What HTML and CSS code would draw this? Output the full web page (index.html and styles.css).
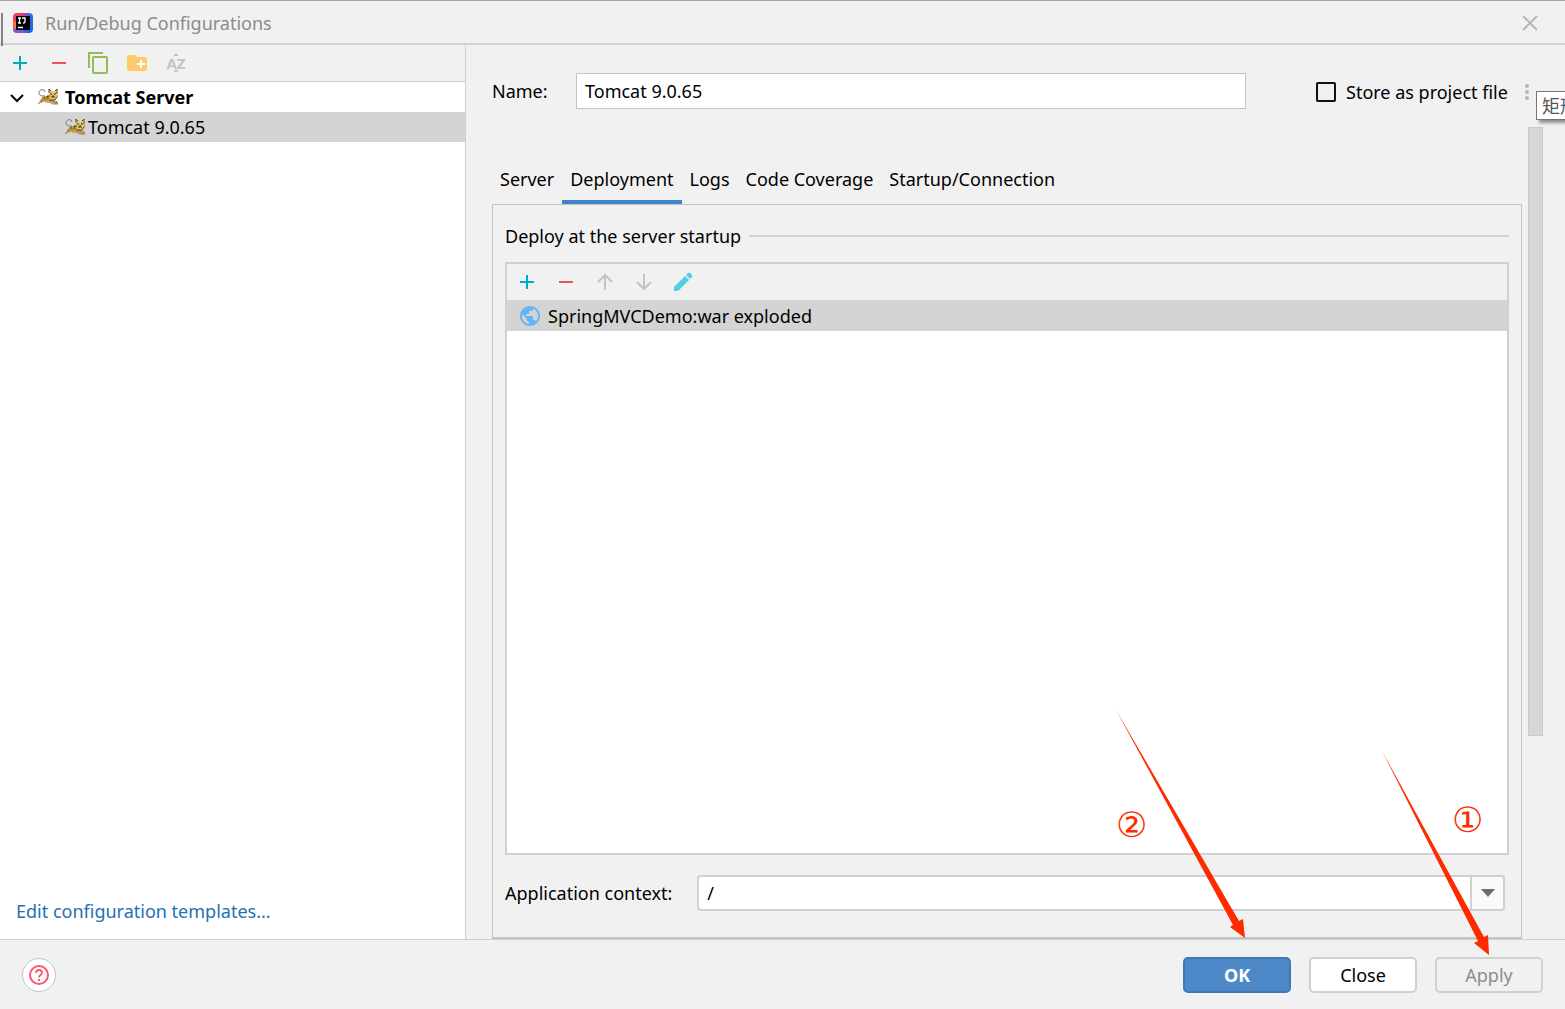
FILE: index.html
```html
<!DOCTYPE html>
<html lang="en">
<head>
    <meta charset="UTF-8">
    <meta name="viewport" content="width=device-width, initial-scale=1.0">
    <title>Run/Debug Configurations</title>
    <link rel="stylesheet" href="styles.css">
</head>
<body>
    <!-- Shared icons -->
    <svg class="sprite" aria-hidden="true">
        <symbol id="icon-plus" viewBox="0 0 20 20">
            <path d="M3 10h14M10 3v14" fill="none" stroke="#00acc1" stroke-width="2"/>
        </symbol>
        <symbol id="icon-minus" viewBox="0 0 20 20">
            <path d="M3 10h14" fill="none" stroke="#ef5350" stroke-width="2"/>
        </symbol>
        <symbol id="icon-tomcat" viewBox="0 0 22 18">
            <path d="M8 8C5 8 2 8 2 5s3-4 5-3l1 2" fill="none" stroke="#777" stroke-width="1"/>
            <path d="M2 14l3-4 4-2h4l4 4 4 3v1h-3l-4-2-5-1-3 1-3 1z" fill="#c4922d"/>
            <path d="M1 16l3-2 1-3M5 10l3-2M8 14l4 0 4 2 5 0M19 13l2 2" fill="none" stroke="#8a8478" stroke-width="1"/>
            <path d="M7 9l1 2M10 8l1 3M13 11l1 2" stroke="#6f5420" stroke-width="1"/>
            <path d="M12 1l2 2h4l2-2v8l-2 3h-4l-2-3z" fill="#edc66c"/>
            <path d="M12 1v4M20 1v5M12 1l2 2M20 1l-2 2M14 12h4l2-3" fill="none" stroke="#55462a" stroke-width="1"/>
            <path d="M13 6h2M17 6h2M10 8h3M14 9h4M15 8h2M20 8h1" stroke="#33301f" stroke-width="1"/>
        </symbol>
    </svg>

    <div class="dialog">
        <header class="title-bar">
            <svg class="app-icon" viewBox="0 0 20 20" aria-hidden="true">
                <defs>
                    <linearGradient id="app-gradient" x1="0" y1="0" x2="1" y2="1">
                        <stop offset="0" stop-color="#ff4b3a"/>
                        <stop offset="0.250" stop-color="#e9376f"/>
                        <stop offset="0.500" stop-color="#2b6cf5"/>
                        <stop offset="1" stop-color="#1565e8"/>
                    </linearGradient>
                </defs>
                <rect width="20" height="20" rx="4" fill="url(#app-gradient)"/>
                <path d="M0 7l4 3v8L1 17z" fill="#f97a2c"/>
                <path d="M1 17l4-4 8 7H4z" fill="#8a55c8"/>
                <rect x="3" y="3" width="14" height="14" fill="#000"/>
                <path d="M5 5h3M6.500 5v5M5 10h3M9 5h3v4q0 1-2 1M5 14.500h5" fill="none" stroke="#fff" stroke-width="1.300"/>
            </svg>
            <h1 class="title">Run/Debug Configurations</h1>
            <button class="icon-button close-button" type="button" aria-label="Close window">
                <svg viewBox="0 0 20 20"><path d="M3 3l14 14M17 3L3 17" fill="none" stroke="#b8b8b8" stroke-width="2"/></svg>
            </button>
        </header>

        <div class="dialog-body">
            <aside class="sidebar">
                <div class="toolbar sidebar-toolbar">
                    <button class="icon-button" type="button" aria-label="Add configuration"><svg><use href="#icon-plus"/></svg></button>
                    <button class="icon-button" type="button" aria-label="Remove configuration"><svg><use href="#icon-minus"/></svg></button>
                    <button class="icon-button" type="button" aria-label="Copy configuration">
                        <svg class="copy-icon" viewBox="0 0 20 24"><path d="M1 17V2h14" fill="none" stroke="#93bc5b" stroke-width="2"/><rect x="5" y="6" width="14" height="16" rx="1" fill="none" stroke="#93bc5b" stroke-width="2"/></svg>
                    </button>
                    <button class="icon-button" type="button" aria-label="Create folder">
                        <svg viewBox="0 0 20 20"><path d="M2 2h6l2 2h8q2 0 2 2v10q0 2-2 2H2q-2 0-2-2V4q0-2 2-2z" fill="#ffca69"/><path d="M10 11h8M14 7v8" stroke="#fff" stroke-width="2"/></svg>
                    </button>
                    <button class="icon-button" type="button" aria-label="Sort configurations" disabled>
                        <svg viewBox="0 0 20 20"><path d="M7 3l3-3 3 3zM7 17l3 3 3-3z" fill="#c4c4c4"/><text class="sort-letters" x="10" y="16">AZ</text></svg>
                    </button>
                </div>
                <ul class="tree">
                    <li class="tree-row tree-group">
                        <svg class="chevron" viewBox="0 0 14 14" aria-hidden="true"><path d="M1 5l6 6 6-6" fill="none" stroke="#000" stroke-width="2"/></svg>
                        <svg class="tomcat-icon" aria-hidden="true"><use href="#icon-tomcat"/></svg>
                        <span>Tomcat Server</span>
                    </li>
                    <li class="tree-row tree-item selected">
                        <svg class="tomcat-icon" aria-hidden="true"><use href="#icon-tomcat"/></svg>
                        <span>Tomcat 9.0.65</span>
                    </li>
                </ul>
                <a class="templates-link" href="#">Edit configuration templates...</a>
            </aside>

            <main class="editor">
                <div class="name-row">
                    <label class="name-label" for="config-name">Name:</label>
                    <input class="name-input" id="config-name" type="text" value="Tomcat 9.0.65">
                    <div class="store-option">
                        <input class="store-checkbox" id="store-file" type="checkbox">
                        <label class="store-label" for="store-file">Store as project file</label>
                        <svg class="more-icon" viewBox="0 0 8 20" aria-hidden="true"><g fill="#b8b8b8"><circle cx="4" cy="4" r="2"/><circle cx="4" cy="10" r="2"/><circle cx="4" cy="16" r="2"/></g></svg>
                    </div>
                </div>

                <div class="editor-content">
                    <div class="tab-pane">
                        <nav class="tabs" role="tablist">
                            <button class="tab" type="button" role="tab">Server</button>
                            <button class="tab active" type="button" role="tab" aria-selected="true">Deployment</button>
                            <button class="tab" type="button" role="tab">Logs</button>
                            <button class="tab" type="button" role="tab">Code Coverage</button>
                            <button class="tab" type="button" role="tab">Startup/Connection</button>
                        </nav>
                        <section class="panel" role="tabpanel">
                            <h2 class="section-title">Deploy at the server startup</h2>
                            <div class="artifacts">
                                <div class="toolbar artifacts-toolbar">
                                    <button class="icon-button" type="button" aria-label="Add artifact"><svg><use href="#icon-plus"/></svg></button>
                                    <button class="icon-button" type="button" aria-label="Remove artifact"><svg><use href="#icon-minus"/></svg></button>
                                    <button class="icon-button" type="button" aria-label="Move up" disabled>
                                        <svg viewBox="0 0 20 20"><path d="M10 18V4M3 10l7-7 7 7" fill="none" stroke="#c4c4c4" stroke-width="2"/></svg>
                                    </button>
                                    <button class="icon-button" type="button" aria-label="Move down" disabled>
                                        <svg viewBox="0 0 20 20"><path d="M10 2v14M3 10l7 7 7-7" fill="none" stroke="#c4c4c4" stroke-width="2"/></svg>
                                    </button>
                                    <button class="icon-button" type="button" aria-label="Edit artifact">
                                        <svg viewBox="0 0 20 20"><path d="M1 15L12 4l4 4L5 19H1zM13 3l2-2q1-1 2 0l2 2q1 1 0 2l-2 2z" fill="#4dd0e1"/></svg>
                                    </button>
                                </div>
                                <ul class="artifact-list">
                                    <li class="artifact selected">
                                        <svg class="globe-icon" viewBox="2 2 20 20" aria-hidden="true"><path fill="#64b5f6" d="M12 2C6.480 2 2 6.480 2 12s4.480 10 10 10 10-4.480 10-10S17.520 2 12 2zm-1 17.930c-3.950-.490-7-3.850-7-7.930 0-.620.080-1.210.210-1.790L9 15v1c0 1.100.900 2 2 2v1.930zm6.900-2.540c-.260-.810-1-1.390-1.900-1.390h-1v-3c0-.550-.450-1-1-1H8v-2h2c.550 0 1-.450 1-1V7h2c1.100 0 2-.900 2-2v-.410c2.930 1.190 5 4.060 5 7.410 0 2.080-.800 3.970-2.100 5.390z"/></svg>
                                        <span>SpringMVCDemo:war exploded</span>
                                    </li>
                                </ul>
                            </div>
                            <div class="context-row">
                                <label for="app-context">Application context:</label>
                                <div class="combo">
                                    <select class="combo-select" id="app-context">
                                        <option>/</option>
                                    </select>
                                    <span class="combo-arrow"><svg viewBox="0 0 14 8"><path d="M0 0h14L7 8z" fill="#6e6e6e"/></svg></span>
                                </div>
                            </div>
                        </section>
                    </div>
                    <div class="scroll-track"><div class="scroll-thumb"></div></div>
                </div>
            </main>
        </div>

        <footer class="footer">
            <button class="help-button" type="button" aria-label="Help">
                <svg viewBox="0 0 20 20"><circle cx="10" cy="10" r="9" fill="none" stroke="#ff5370" stroke-width="2"/><path d="M7 8q0-3 3-3t3 3q0 1-1.500 2T10 12.500" fill="none" stroke="#ff5370" stroke-width="1.800"/><path d="M9 14h2v2H9z" fill="#ff5370"/></svg>
            </button>
            <div class="actions">
                <button class="button primary" type="button">OK</button>
                <button class="button" type="button">Close</button>
                <button class="button" type="button" disabled>Apply</button>
            </div>
        </footer>

        <!-- Annotations drawn over the dialog -->
        <span class="edge-mark"></span>
        <span class="tooltip" lang="zh">矩形</span>
        <svg class="arrow arrow-ok" viewBox="0 0 130 228" aria-hidden="true"><path d="M-1 -1L122 210L126 208L128 227L113 216L116 214z" fill="#ff2a00"/></svg>
        <svg class="arrow arrow-apply" viewBox="0 0 110 205" aria-hidden="true"><path d="M0 0L102 186L106 184L107 204L92 192L96 190z" fill="#ff2a00"/></svg>
        <span class="step step-ok">②</span>
        <span class="step step-apply">①</span>
    </div>
</body>
</html>
```
FILE: styles.css
```css
:root {
    --bg: #f1f1f1;
    --white: #fff;
    --selected: #d4d4d4;
    --border: #c4c4c4;
    --border-light: #d0d0d0;
    --accent: #4083c9;
    --link: #2470b3;
    --annotation: #ff2a00;
}

* {
    margin: 0;
    padding: 0;
    box-sizing: border-box;
}

body {
    font-family: "Noto Sans", "Noto Sans CJK SC", sans-serif;
    font-size: 18px;
    line-height: 24px;
    color: #000;
    background-color: var(--bg);
}

button,
input,
select {
    font: inherit;
    color: inherit;
}

ul {
    list-style: none;
}

svg {
    display: block;
}

.sprite {
    display: none;
}

.dialog {
    position: relative;
    display: flex;
    flex-direction: column;
    min-height: 100vh;
    overflow: hidden;
    border-top: 1px solid #a3a3a3;
}

/* Title bar */
.title-bar {
    display: flex;
    align-items: center;
    gap: 12px;
    height: 44px;
    padding: 2px 25px 0 13px;
    border-bottom: 2px solid var(--border-light);
}

.app-icon {
    width: 20px;
    height: 20px;
}

.title {
    flex: 1;
    font-size: 18px;
    font-weight: 400;
    color: #8c8c8c;
}

.icon-button {
    width: 20px;
    height: 20px;
    border: none;
    background: none;
}

.icon-button svg {
    width: 20px;
    height: 20px;
    overflow: visible;
}

.icon-button .copy-icon {
    height: 24px;
    margin-top: -2px;
}

.dialog-body {
    flex: 1;
    display: flex;
}

/* Configuration tree */
.sidebar {
    display: flex;
    flex-direction: column;
    flex: 0 0 466px;
    background-color: var(--white);
    border-right: 1px solid var(--border-light);
}

.toolbar {
    display: flex;
    align-items: center;
    gap: 19px;
    height: 37px;
    padding: 0 10px;
    background-color: var(--bg);
}

.sidebar-toolbar {
    border-bottom: 1px solid var(--border-light);
}

.artifacts-toolbar {
    height: 36px;
}

.sort-letters {
    font-size: 15px;
    font-weight: 700;
    fill: #c4c4c4;
    text-anchor: middle;
}

.tree {
    flex: 1;
}

.tree-row {
    display: flex;
    align-items: center;
    height: 30px;
}

.tree-group {
    gap: 6px;
    padding-left: 10px;
    font-weight: 700;
}

.tree-item {
    gap: 2px;
    padding-left: 64px;
}

.selected {
    background-color: var(--selected);
}

.chevron {
    width: 14px;
    height: 14px;
    margin-right: 7px;
}

.tomcat-icon {
    width: 22px;
    height: 18px;
}

.templates-link {
    padding: 16px;
    color: var(--link);
    text-decoration: none;
}

/* Editor */
.editor {
    flex: 1;
    display: flex;
    flex-direction: column;
    padding: 28px 22px 0 26px;
}

.name-row {
    display: flex;
    align-items: center;
    padding-right: 12px;
}

.name-label {
    width: 84px;
}

.name-input {
    flex: 1;
    min-width: 0;
    height: 36px;
    padding: 0 8px;
    border: 1px solid var(--border);
    background-color: var(--white);
    outline: none;
}

.store-option {
    display: flex;
    align-items: center;
    gap: 10px;
    width: 215px;
    margin-left: 70px;
    padding-top: 2px;
}

.store-checkbox {
    appearance: none;
    width: 20px;
    height: 20px;
    border: 2px solid #111;
    border-radius: 2px;
}

.store-label {
    flex: 1;
}

.more-icon {
    width: 8px;
    height: 20px;
}

.editor-content {
    flex: 1;
    display: flex;
    gap: 6px;
    margin-top: 18px;
}

.tab-pane {
    flex: 1;
    display: flex;
    flex-direction: column;
    padding-top: 31px;
}

.tabs {
    display: flex;
}

.tab {
    height: 46px;
    padding: 0 8px;
    border: none;
    border-bottom: 4px solid transparent;
    background: none;
}

.tab.active {
    border-bottom-color: var(--accent);
}

.panel {
    flex: 1;
    display: flex;
    flex-direction: column;
    padding: 19px 12px 26px;
    border: 1px solid var(--border);
    border-bottom-width: 2px;
}

.section-title {
    display: flex;
    align-items: center;
    gap: 8px;
    font-size: 18px;
    font-weight: 400;
}

.section-title::after {
    content: "";
    flex: 1;
    height: 2px;
    background-color: var(--border-light);
}

.artifacts {
    flex: 1;
    margin-top: 14px;
    border: 2px solid var(--border-light);
    background-color: var(--white);
}

.artifact {
    display: flex;
    align-items: center;
    gap: 8px;
    height: 31px;
    padding-left: 13px;
}

.globe-icon {
    width: 20px;
    height: 20px;
}

.context-row {
    display: flex;
    align-items: center;
    gap: 25px;
    margin-top: 20px;
    padding-right: 4px;
}

.combo {
    flex: 1;
    display: grid;
    grid-template-columns: 1fr 35px;
}

.combo-select {
    grid-area: 1 / 1 / 2 / 3;
    appearance: none;
    height: 36px;
    padding: 0 8px;
    border: 2px solid var(--border-light);
    border-radius: 4px;
    background-color: var(--white);
}

.combo-arrow {
    grid-area: 1 / 2 / 2 / 3;
    display: grid;
    place-items: center;
    border: 2px solid var(--border-light);
    border-radius: 0 4px 4px 0;
    background-color: #fafafa;
    pointer-events: none;
}

.combo-arrow svg {
    width: 14px;
    height: 8px;
}

.scroll-track {
    width: 15px;
}

.scroll-thumb {
    height: 75%;
    border: 1px solid #c9c9c9;
    background-color: #d6d6d6;
}

/* Footer */
.footer {
    display: flex;
    align-items: center;
    justify-content: space-between;
    height: 70px;
    padding: 0 22px;
    border-top: 1px solid var(--border-light);
}

.help-button {
    display: grid;
    place-items: center;
    width: 34px;
    height: 34px;
    border: 1px solid var(--border);
    border-radius: 50%;
    background-color: var(--white);
}

.help-button svg {
    width: 20px;
    height: 20px;
}

.actions {
    display: flex;
    gap: 18px;
}

.button {
    width: 108px;
    height: 36px;
    border: 2px solid var(--border-light);
    border-radius: 5px;
    background-color: var(--white);
}

.button.primary {
    border-color: #4179b8;
    background-color: #4d89c9;
    color: var(--white);
    font-weight: 700;
}

.button:disabled {
    background-color: var(--bg);
    color: #8c8c8c;
}

/* Annotations */
.edge-mark {
    position: absolute;
    top: 12px;
    left: 1px;
    width: 2px;
    height: 33px;
    background-color: #808080;
}

.tooltip {
    position: absolute;
    top: 90px;
    left: 1536px;
    width: 48px;
    height: 29px;
    padding-left: 5px;
    border: 1px solid #767676;
    background-color: var(--white);
    box-shadow: 3px 3px 3px rgba(0, 0, 0, 0.4);
    color: #575757;
    line-height: 28px;
    white-space: nowrap;
}

.arrow {
    position: absolute;
    overflow: visible;
}

.arrow-ok {
    top: 710px;
    left: 1117px;
    width: 130px;
    height: 228px;
}

.arrow-apply {
    top: 750px;
    left: 1382px;
    width: 110px;
    height: 205px;
}

.step {
    position: absolute;
    font-family: "DejaVu Sans", sans-serif;
    font-size: 35px;
    line-height: 36px;
    color: var(--annotation);
}

.step-ok {
    top: 806px;
    left: 1116px;
}

.step-apply {
    top: 801px;
    left: 1452px;
}
```
